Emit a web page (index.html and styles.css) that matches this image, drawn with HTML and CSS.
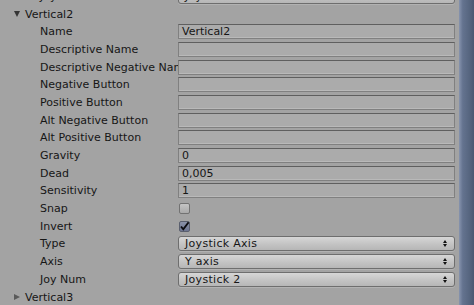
FILE: index.html
```html
<!DOCTYPE html>
<html lang="en">
<head>
    <meta charset="UTF-8">
    <title>Input Manager</title>
    <link rel="stylesheet" href="styles.css">
</head>
<body>
    <div class="window">
        <div class="inspector">
            <div class="row">
                <div class="label">Joy Num</div>
                <div class="popup">Joystick 1<span class="arrows"></span></div>
            </div>
            <div class="row header">
                <span class="fold open"></span>Vertical2
            </div>
            <div class="row">
                <div class="label">Name</div>
                <div class="field">Vertical2</div>
            </div>
            <div class="row">
                <div class="label">Descriptive Name</div>
                <div class="field"></div>
            </div>
            <div class="row">
                <div class="label">Descriptive Negative Name</div>
                <div class="field"></div>
            </div>
            <div class="row">
                <div class="label">Negative Button</div>
                <div class="field"></div>
            </div>
            <div class="row">
                <div class="label">Positive Button</div>
                <div class="field"></div>
            </div>
            <div class="row">
                <div class="label">Alt Negative Button</div>
                <div class="field"></div>
            </div>
            <div class="row">
                <div class="label">Alt Positive Button</div>
                <div class="field"></div>
            </div>
            <div class="row">
                <div class="label">Gravity</div>
                <div class="field">0</div>
            </div>
            <div class="row">
                <div class="label">Dead</div>
                <div class="field">0,005</div>
            </div>
            <div class="row">
                <div class="label">Sensitivity</div>
                <div class="field">1</div>
            </div>
            <div class="row">
                <div class="label">Snap</div>
                <div class="toggle"></div>
            </div>
            <div class="row">
                <div class="label">Invert</div>
                <div class="toggle checked">
                    <svg width="11" height="11" viewBox="0 0 11 11"><path d="M2 5.5 L4.3 8.3 L9.6 1.2" fill="none" stroke="#0c0c10" stroke-width="1.9"/></svg>
                </div>
            </div>
            <div class="row">
                <div class="label">Type</div>
                <div class="popup">Joystick Axis<span class="arrows"></span></div>
            </div>
            <div class="row">
                <div class="label">Axis</div>
                <div class="popup">Y axis<span class="arrows"></span></div>
            </div>
            <div class="row">
                <div class="label">Joy Num</div>
                <div class="popup">Joystick 2<span class="arrows"></span></div>
            </div>
            <div class="row header">
                <span class="fold"></span>Vertical3
            </div>
        </div>
        <div class="scrollbar"></div>
    </div>
</body>
</html>
```

FILE: styles.css
```css
body {
    margin: 0;
    height: 305px;
    overflow: hidden;
    background: #a3a3a3;
    font-family: "DejaVu Sans", sans-serif;
    font-size: 11px;
    color: #161616;
}

.window {
    display: flex;
    height: 305px;
}

.inspector {
    flex: 1;
    margin-top: -12.5px;
    padding-right: 4px;
}

.row {
    display: flex;
    align-items: center;
    height: 17.7px;
}

.header {
    padding-left: 14px;
}

.fold {
    width: 0;
    height: 0;
    margin-right: 5px;
    border-style: solid;
    border-width: 3.5px 0 3.5px 6px;
    border-color: transparent transparent transparent #5a5a5a;
}

.fold.open {
    border-width: 6px 3.5px 0 3.5px;
    border-color: #353535 transparent transparent transparent;
}

.label {
    width: 138px;
    padding-left: 40px;
    white-space: nowrap;
    overflow: hidden;
    flex-shrink: 0;
}

.field {
    flex: 1;
    height: 15px;
    box-sizing: border-box;
    padding-left: 3px;
    line-height: 13px;
    background: #ababab;
    border: 1px solid #808080;
    border-top-color: #5f5f5f;
    box-shadow: inset 0 -1px 0 #b9b9b9;
}

.toggle {
    width: 11px;
    height: 11px;
    box-sizing: border-box;
    margin-left: 1px;
    border: 1px solid #727272;
    border-radius: 2px;
    background: linear-gradient(#c4c4c4, #a9a9a9);
}

.toggle svg {
    display: block;
    margin: -1px 0 0 -1px;
}

.toggle.checked {
    background: linear-gradient(#8a92a8, #6d7590);
    border-color: #5a5f6e;
}

.popup {
    flex: 1;
    position: relative;
    height: 15px;
    box-sizing: border-box;
    padding-left: 6px;
    line-height: 13px;
    letter-spacing: 0.3px;
    border: 1px solid #6e6e6e;
    border-radius: 3px;
    background: linear-gradient(#d6d6d6, #c2c2c2 60%, #b6b6b6);
    box-shadow: 0 1px 0 #b2b2b2;
}

.arrows {
    position: absolute;
    right: 7px;
    top: 3px;
    width: 0;
    height: 0;
    border-style: solid;
    border-width: 0 2px 3px 2px;
    border-color: transparent transparent #111 transparent;
}

.arrows::after {
    content: "";
    position: absolute;
    left: -2px;
    top: 4px;
    border-style: solid;
    border-width: 3px 2px 0 2px;
    border-color: #111 transparent transparent transparent;
}

.scrollbar {
    width: 15px;
    background: linear-gradient(90deg, #8794ae, #64738f 25%, #56657f 70%, #4b5872);
}
```
